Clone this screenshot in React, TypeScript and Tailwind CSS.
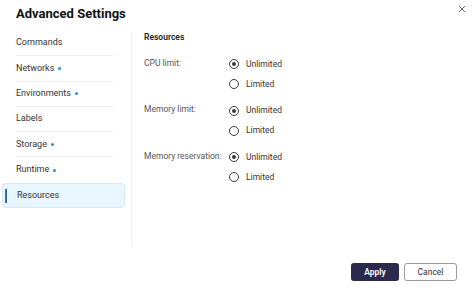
const navItems = [
  { label: "Commands", dot: false },
  { label: "Networks", dot: true },
  { label: "Environments", dot: true },
  { label: "Labels", dot: false },
  { label: "Storage", dot: true },
  { label: "Runtime", dot: true },
  { label: "Resources", dot: false },
];

const limits = ["CPU limit:", "Memory limit:", "Memory reservation:"];

const Radio = ({ checked, label }: { checked: boolean; label: string }) => (
  <div className="flex items-center h-[20px]">
    <span className="w-[10px] h-[10px] rounded-full border border-[#3a3a3a] flex items-center justify-center">
      {checked && <span className="w-[4px] h-[4px] rounded-full bg-[#3a3a3a]" />}
    </span>
    <span className="ml-[7px] text-[8.5px] text-[#333]">{label}</span>
  </div>
);

const App = () => {
  return (
    <div
      className="w-[474px] h-[292px] bg-white relative"
      style={{ fontFamily: "Roboto, 'Noto Sans', sans-serif" }}
    >
      <div className="flex items-start justify-between pl-4 pr-[8px] h-[30px]">
        <h1 className="text-[13px] font-bold text-[#111] leading-none mt-[7px]">Advanced Settings</h1>
        <button className="mt-[5px] text-[#666]">
          <svg width="8" height="8" viewBox="0 0 8 8">
            <path d="M1 1 L7 7 M7 1 L1 7" stroke="currentColor" strokeWidth="1" />
          </svg>
        </button>
      </div>

      <div className="flex h-[217px]">
        <div className="w-[123px] ml-[2px] mt-[1px]">
          {navItems.map((item, i) => {
            const selected = item.label === "Resources";
            const last = i === navItems.length - 1;
            return (
              <div
                key={item.label}
                className={
                  selected
                    ? "relative h-[25.3px] flex items-center px-[14px] bg-[#e9f6fd] border border-[#d4e9f5] rounded-[4px]"
                    : "h-[25.3px] px-[14px]"
                }
              >
                {selected && (
                  <span className="absolute left-[2px] top-[5px] h-[14px] w-[1.5px] bg-[#2f6fb0]" />
                )}
                <div
                  className={
                    selected
                      ? "flex items-center text-[9px] text-[#333]"
                      : "h-full flex items-center text-[9px] text-[#333] mr-[-2px] " +
                        (last || navItems[i + 1].label === "Resources" ? "" : "border-b border-[#eeeeee]")
                  }
                >
                  {item.label}
                  {item.dot && <span className="ml-[4px] w-[3px] h-[3px] rounded-full bg-[#2f8fd6]" />}
                </div>
              </div>
            );
          })}
        </div>

        <div className="ml-[6px] mt-[2px] w-px h-[215px] bg-[#f0f0f0]" />

        <div className="pl-[12px] pt-[1px]">
          <div className="text-[8.5px] font-semibold text-[#222] h-[12px] flex items-center">Resources</div>
          <div className="mt-[11px] flex flex-col gap-[6.5px]">
            {limits.map((l) => (
              <div key={l} className="flex">
                <div className="w-[85px] text-[8.5px] text-[#555] h-[20px] flex items-center -mt-[1px]">{l}</div>
                <div>
                  <Radio checked label="Unlimited" />
                  <Radio checked={false} label="Limited" />
                </div>
              </div>
            ))}
          </div>
        </div>
      </div>

      <div className="flex justify-end gap-[5px] pr-[17px] mt-[16px]">
        <button className="w-[48px] h-[18px] rounded-[3px] bg-[#2b2a4c] text-white text-[8.5px] font-semibold">
          Apply
        </button>
        <button className="w-[53px] h-[18px] rounded-[3px] border border-[#9a9a9a] bg-white text-[#333] text-[8.5px]">
          Cancel
        </button>
      </div>
    </div>
  );
};

export default App;
